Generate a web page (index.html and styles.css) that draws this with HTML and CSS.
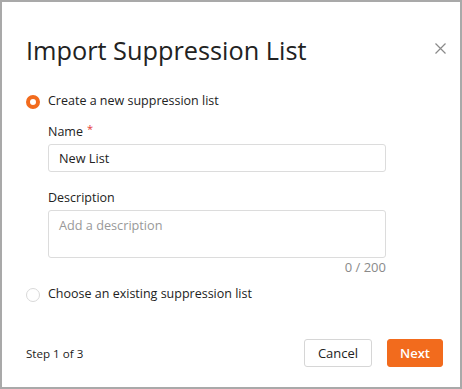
FILE: index.html
```
<!DOCTYPE html>
<html>
<head>
<meta charset="utf-8">
<link rel="stylesheet" href="styles.css">
</head>
<body>
<div class="modal">
  <div class="header">
    <h1 class="title">Import Suppression List</h1>
    <button class="close" aria-label="Close">
      <svg width="11" height="11" viewBox="0 0 11 11"><path d="M0.5 0.5L10.5 10.5M10.5 0.5L0.5 10.5" stroke="#8a8a8a" stroke-width="1.2" fill="none"/></svg>
    </button>
  </div>
  <div class="body">
    <label class="radio-row">
      <span class="radio checked"></span>
      <span class="radio-label">Create a new suppression list</span>
    </label>
    <div class="fields">
      <div class="field">
        <div class="label">Name <span class="req">*</span></div>
        <div class="input">New List</div>
      </div>
      <div class="field field-desc">
        <div class="label">Description</div>
        <div class="textarea">Add a description</div>
        <div class="counter">0 / 200</div>
      </div>
    </div>
    <label class="radio-row radio-row-2">
      <span class="radio"></span>
      <span class="radio-label">Choose an existing suppression list</span>
    </label>
  </div>
  <div class="footer">
    <span class="step">Step 1 of 3</span>
    <div class="actions">
      <button class="btn btn-secondary">Cancel</button>
      <button class="btn btn-primary">Next</button>
    </div>
  </div>
</div>
</body>
</html>
```
FILE: styles.css
```
* { box-sizing: border-box; }
html, body { margin: 0; padding: 0; }
body {
  font-family: "Open Sans", "Noto Sans", sans-serif;
  color: #222;
  background: #fff;
}
.modal {
  width: 462px;
  height: 389px;
  border: 2px solid #a9a9a9;
  display: flex;
  flex-direction: column;
  padding: 0 17px 0 24px;
}
.header {
  display: flex;
  justify-content: space-between;
  align-items: flex-start;
  padding-top: 29px;
}
.title {
  margin: 0;
  font-size: 25.3px;
  font-weight: 400;
  line-height: 38px;
  color: #222;
}
.close {
  border: 0;
  background: none;
  padding: 0;
  margin-top: 12px;
  margin-right: -3px;
  width: 11px;
  height: 11px;
  display: flex;
  cursor: pointer;
}
.body {
  padding-top: 22px;
  flex: 1;
}
.radio-row {
  display: flex;
  align-items: center;
  gap: 8px;
  font-size: 12.5px;
  line-height: 20px;
}
.radio {
  width: 14px;
  height: 14px;
  border-radius: 50%;
  border: 1px solid #d9d9d9;
  background: #fff;
  flex: none;
  margin-top: 1px;
}
.radio.checked {
  border: 4px solid #f26b1d;
}
.fields {
  padding-left: 22px;
  padding-right: 57px;
  padding-top: 12px;
}
.label {
  font-size: 12.5px;
  line-height: 18px;
  margin-bottom: 3px;
  display: flex;
  gap: 4px;
}
.req { color: #e53935; font-size: 11px; line-height: 11px; }
.input {
  height: 28px;
  border: 1px solid #dcdcdc;
  border-radius: 3px;
  padding: 0 10px;
  font-size: 12.7px;
  line-height: 26px;
}
.field-desc { margin-top: 17px; }
.textarea {
  height: 48px;
  border: 1px solid #dcdcdc;
  border-radius: 3px;
  padding: 5px 10px;
  font-size: 12.7px;
  line-height: 18px;
  color: #999;
}
.counter {
  text-align: right;
  font-size: 13px;
  line-height: 18px;
  color: #8a8a8a;
}
.radio-row-2 { margin-top: 8px; }
.footer {
  display: flex;
  justify-content: space-between;
  align-items: center;
  padding-bottom: 20px;
}
.step { font-size: 11.6px; color: #222; }
.actions { display: flex; gap: 15px; }
.btn {
  height: 28px;
  font-family: inherit;
  font-size: 13px;
  border-radius: 3px;
  padding: 0;
  cursor: pointer;
}
.btn-secondary {
  background: #fff;
  border: 1px solid #d6d6d6;
  color: #222;
  width: 68px;
}
.btn-primary {
  background: #f26b1d;
  border: 1px solid #f26b1d;
  color: #fff;
  font-weight: 600;
  width: 56px;
}
```
